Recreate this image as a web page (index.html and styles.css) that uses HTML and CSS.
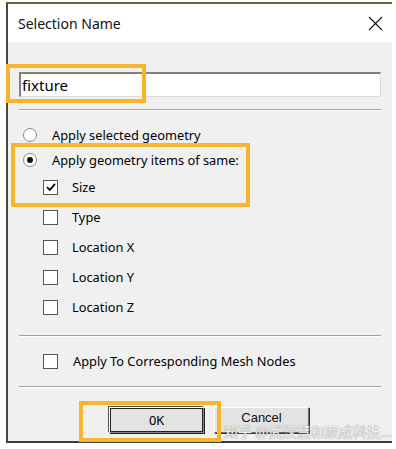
FILE: index.html
```html
<!DOCTYPE html>
<html lang="en">
<head>
  <meta charset="UTF-8" />
  <title>Selection Name</title>
  <link rel="stylesheet" href="styles.css">
</head>
<body>

  <div class="dialog">
    <!-- TITLE BAR -->
    <div class="titlebar">
      <span class="title">Selection Name</span>
      <svg class="close" width="15" height="15" viewBox="0 0 15 15">
        <path d="M1 1 L14 14 M14 1 L1 14" stroke="#111" stroke-width="1.1" fill="none"/>
      </svg>
    </div>

    <div class="content">
      <div class="textbox">fixture</div>
      <div class="sep first"></div>

      <div class="radio-row top">
        <span class="radio"></span>
        <span>Apply selected geometry</span>
      </div>
      <div class="radio-row">
        <span class="radio on"></span>
        <span>Apply geometry items of same:</span>
      </div>

      <div class="check-row">
        <span class="check">
          <svg width="12" height="12" viewBox="0 0 12 12"><path d="M2 6.2 L4.8 9 L10 2.8" stroke="#000" stroke-width="1.8" fill="none"/></svg>
        </span>
        <span>Size</span>
      </div>
      <div class="check-row"><span class="check"></span><span>Type</span></div>
      <div class="check-row"><span class="check"></span><span>Location X</span></div>
      <div class="check-row"><span class="check"></span><span>Location Y</span></div>
      <div class="check-row"><span class="check"></span><span>Location Z</span></div>

      <div class="sep mid"></div>
      <div class="check-row mesh"><span class="check"></span><span>Apply To Corresponding Mesh Nodes</span></div>
      <div class="sep last"></div>

      <div class="buttons">
        <button class="btn default">OK</button>
        <button class="btn cancel">Cancel</button>
      </div>
    </div>
  </div>

  <!-- annotation boxes -->
  <div class="mark mark-name"></div>
  <div class="mark mark-apply"></div>
  <div class="mark mark-ok"></div>
  <div class="watermark">知乎 @武汉慧和聚成科技...</div>

</body>
</html>
```

FILE: styles.css
```css
body { margin: 0; background: #fff; font-family: "Noto Sans", "Liberation Sans", sans-serif; color: #000; position: relative; width: 396px; height: 449px; overflow: hidden; }
.dialog { margin: 2px 0 0 6px; width: 384px; border-top: 2px solid #6e6a3f; border-left: 2px solid #4a4838; border-bottom: 2px solid #3c3c3c; }
.titlebar { height: 38px; background: #fff; display: flex; align-items: center; justify-content: space-between; padding: 0 9px 0 10px; }
.title { font-size: 14px; color: #111; }
.close { display: block; }
.content { background: #f0f0f0; padding: 30px 11px 8px 11px; font-size: 12.8px; }
.textbox { height: 22px; background: #fff; border-top: 2px solid #808080; border-left: 2px solid #808080; border-right: 1px solid #dcdcdc; border-bottom: 1px solid #dcdcdc; padding-left: 1px; font-size: 15px; line-height: 22px; }
.sep { height: 1px; background: #a0a0a0; border-bottom: 1px solid #fff; }
.sep.first { margin-top: 12px; }
.sep.mid { margin-top: 13px; }
.sep.last { margin-top: 10px; }
.radio-row { height: 25px; display: flex; align-items: center; gap: 15px; padding-left: 4px; }
.radio-row.top { margin-top: 11px; }
.radio { width: 12px; height: 12px; border: 1px solid #8a8a8a; border-radius: 50%; background: #fff; display: flex; align-items: center; justify-content: center; }
.radio.on::after { content: ""; width: 6px; height: 6px; border-radius: 50%; background: #111; }
.check-row { height: 30px; display: flex; align-items: center; gap: 14px; padding-left: 24px; }
.check-row.mesh { margin-top: 9px; gap: 15px; }
.check { width: 13px; height: 13px; border: 1px solid #555; background: #fff; display: flex; align-items: center; justify-content: center; }
.buttons { display: flex; gap: 10px; margin: 19px 0 0 90px; }
.btn { width: 95px; height: 26px; font-family: "DejaVu Sans Mono", "Liberation Mono", monospace; font-size: 13px; background: #e3e3e3; border: 1px solid; border-color: #fff #6a6a6a #6a6a6a #fff; box-shadow: 1px 1px 0 #333; padding: 0; color: #111; }
.btn.cancel { font-family: "Liberation Sans", sans-serif; font-size: 13px; padding-bottom: 6px; }
.btn.default { outline: 1px solid #222; outline-offset: -2px; border-color: #fff #888 #888 #fff; box-shadow: 1px 1px 0 #222, -1px -1px 0 #555; }
.mark { position: absolute; border: 4px solid #f6b52b; }
.mark-name { left: 6px; top: 64px; width: 132px; height: 31px; }
.mark-apply { left: 11px; top: 143px; width: 231px; height: 56px; }
.mark-ok { left: 79px; top: 401px; width: 134px; height: 33px; }
.watermark { position: absolute; left: 224px; top: 421px; font-size: 14px; font-family: "Noto Sans CJK SC", sans-serif; color: rgba(255,255,255,0.85); text-shadow: 0 0 1px #999, 0 0 1px #999; }
```
